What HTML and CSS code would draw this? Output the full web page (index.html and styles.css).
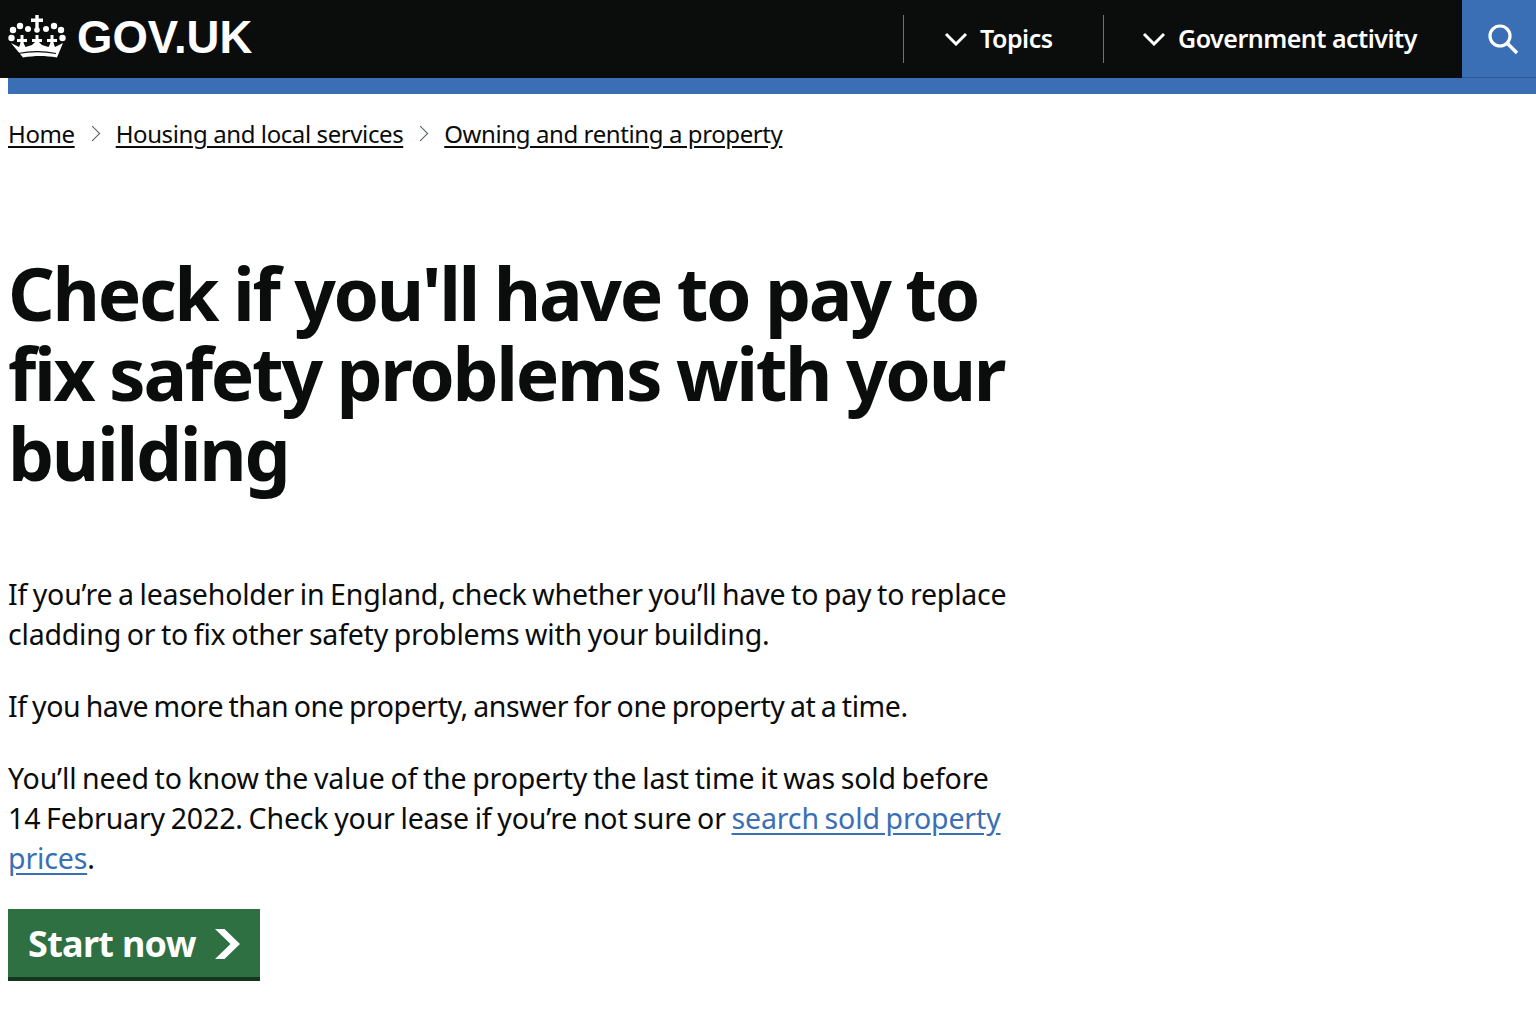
FILE: index.html
```html
<!DOCTYPE html>
<html lang="en">
<head>
  <meta charset="UTF-8">
  <title>Check if you'll have to pay to fix safety problems with your building - GOV.UK</title>
  <link rel="stylesheet" href="styles.css">
</head>
<body>
  <header class="masthead">
    <a class="logo" href="#">
      <svg class="crown" viewBox="0 0 58 44" width="58" height="44" fill="#fff">
        <path d="M27.300 1h3.400v3.600h4.300V8h-4.300v6h-3.400V8H23V4.600h4.300z"/>
        <circle cx="29" cy="16" r="2.800"/>
        <circle cx="12" cy="12" r="3.200"/>
        <circle cx="46" cy="12" r="3.200"/>
        <circle cx="20" cy="15" r="3"/>
        <circle cx="38" cy="15" r="3"/>
        <circle cx="5" cy="16" r="3.200"/>
        <circle cx="53" cy="16" r="3.200"/>
        <circle cx="3.500" cy="24" r="3.200"/>
        <circle cx="54.500" cy="24" r="3.200"/>
        <path d="M3 29l8 4 3-7 3.500 7 6.500-2 5-5 5 5 6.500 2 3.500-7 3 7 8-4-6 14.500c-12-2-22-2-34 0z"/>
        <path d="M12.500 21h3v4h3.500v3h-3.500v6h-3v-6H9v-3h3.500zM27.500 21h3v4h3.500v3h-3.500v6h-3v-6H24v-3h3.500zM42.500 21h3v4H49v3h-3.500v6h-3v-6H39v-3h3.500z"/>
        <path d="M10 39.500c12-2.400 26-2.400 38 0" fill="none" stroke="#0b0c0c" stroke-width="1.200"/>
      </svg>
      <span class="logo-text">GOV.UK</span>
    </a>
    <nav class="main-nav">
      <a class="nav-item nav-topics" href="#">
        <svg class="chevron" viewBox="0 0 24 14" width="24" height="14"><path d="M2 2l10 10L22 2" fill="none" stroke="#fff" stroke-width="3"/></svg>
        <span>Topics</span>
      </a>
      <a class="nav-item nav-activity" href="#">
        <svg class="chevron" viewBox="0 0 24 14" width="24" height="14"><path d="M2 2l10 10L22 2" fill="none" stroke="#fff" stroke-width="3"/></svg>
        <span>Government activity</span>
      </a>
    </nav>
    <a class="search-btn" href="#" aria-label="Search">
      <svg viewBox="0 0 32 32" width="32" height="32"><circle cx="13" cy="13" r="10" fill="none" stroke="#fff" stroke-width="3.200"/><path d="M20 20l10 10" stroke="#fff" stroke-width="3.600"/></svg>
    </a>
  </header>
  <div class="blue-bar"></div>

  <nav class="breadcrumbs">
    <a href="#">Home</a>
    <span class="crumb-sep"></span>
    <a href="#">Housing and local services</a>
    <span class="crumb-sep"></span>
    <a href="#">Owning and renting a property</a>
  </nav>

  <main class="content">
    <h1>Check if you'll have to pay to fix safety problems with your building</h1>
    <p>If you’re a leaseholder in England, check whether you’ll have to pay to replace cladding or to fix other safety problems with your building.</p>
    <p class="tight">If you have more than one property, answer for one property at a time.</p>
    <p class="loose">You’ll need to know the value of the property the last time it was sold before 14 February 2022. Check your lease if you’re not sure or <a href="#">search sold property prices</a>.</p>
    <a class="start-btn" href="#">
      <span>Start now</span>
      <svg viewBox="0 0 25 30" width="25" height="30"><path d="M0 0h9.500L25 15 9.500 30H0l15.500-15z" fill="#fff"/></svg>
    </a>
  </main>
</body>
</html>
```

FILE: styles.css
```css
* {
  box-sizing: border-box;
  margin: 0;
  padding: 0;
}

body {
  font-family: "Noto Sans", "Liberation Sans", sans-serif;
  color: #0b0c0c;
  background: #fff;
}

.masthead {
  display: flex;
  align-items: center;
  height: 78px;
  background: #0b0c0c;
  padding-left: 8px;
}

.logo {
  display: flex;
  align-items: center;
  gap: 11px;
  color: #fff;
  text-decoration: none;
}

.crown {
  margin-bottom: 6px;
}

.logo-text {
  font-family: "Liberation Sans", Arial, sans-serif;
  font-size: 45.5px;
  font-weight: 700;
  line-height: 1;
  padding-bottom: 2px;
}

.main-nav {
  display: flex;
  margin-left: auto;
  align-self: center;
}

.nav-item {
  display: flex;
  align-items: center;
  gap: 12px;
  height: 48px;
  border-left: 1px solid #6f7272;
  color: #fff;
  font-size: 25px;
  font-weight: 600;
  letter-spacing: -0.5px;
  text-decoration: none;
}

.nav-item span {
  padding-bottom: 2px;
}

.nav-topics {
  width: 200px;
  padding-left: 40px;
}

.nav-activity {
  width: 359px;
  padding-left: 38px;
}

.search-btn {
  display: flex;
  align-items: center;
  justify-content: center;
  width: 74px;
  height: 78px;
  padding-left: 8px;
  background: #3a6fb5;
  border-bottom: 1px solid #2c5a96;
}

.blue-bar {
  height: 16px;
  margin-left: 8px;
  background: #3a6fb5;
}

.breadcrumbs {
  display: flex;
  align-items: center;
  padding: 23px 8px 0;
  height: 56px;
  font-size: 24px;
  letter-spacing: -0.4px;
}

.breadcrumbs a {
  color: #0b0c0c;
  text-underline-offset: 3px;
}

.crumb-sep {
  width: 11px;
  height: 11px;
  margin: 0 18px 0 12px;
  border-top: 1.5px solid #505a5f;
  border-right: 1.5px solid #505a5f;
  transform: rotate(45deg);
}

.content {
  padding: 103px 8px 0;
  width: 1030px;
}

h1 {
  font-size: 73px;
  font-weight: 700;
  line-height: 80px;
  letter-spacing: -2.3px;
  word-spacing: -1px;
  margin-bottom: 81px;
}

p {
  font-size: 28.5px;
  line-height: 40px;
  letter-spacing: -0.2px;
  word-spacing: -1.5px;
  margin-bottom: 32px;
}

p.tight {
  letter-spacing: -0.43px;
}

p.loose {
  letter-spacing: -0.15px;
}

p a {
  color: #3a6fb5;
  text-underline-offset: 4px;
}

.start-btn {
  display: inline-flex;
  align-items: center;
  gap: 19px;
  height: 72px;
  padding: 0 20px;
  background: #2f7043;
  border-bottom: 4px solid #12361f;
  color: #fff;
  font-size: 36px;
  font-weight: 700;
  letter-spacing: -0.7px;
  text-decoration: none;
  margin-top: -1px;
}

.start-btn svg {
  margin-top: 2px;
}
```
